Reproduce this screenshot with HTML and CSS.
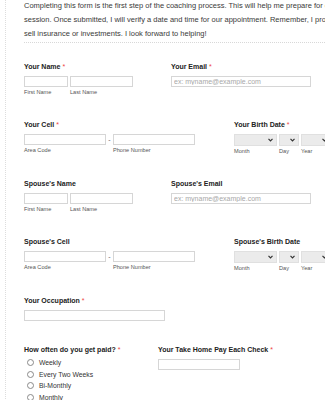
FILE: index.html
```html
<!DOCTYPE html>
<html lang="en">
<head>
    <meta charset="UTF-8">
    <meta name="viewport" content="width=device-width, initial-scale=1.0">
    <title>Coaching Intake Form</title>
    <link rel="stylesheet" href="styles.css">
</head>
<body>
    <div class="page">
        <p class="intro">
            Completing this form is the first step of the coaching process. This will help me prepare for our first<br>
            session. Once submitted, I will verify a date and time for our appointment. Remember, I provide education only and do not<br>
            sell insurance or investments. I look forward to helping!
        </p>
        <div class="separator"></div>

        <div class="row">
            <div class="field name-col">
                <label class="label">Your Name <span class="req">*</span></label>
                <div class="inputs">
                    <div class="sub"><input class="box w-first" type="text"><span class="hint">First Name</span></div>
                    <div class="sub"><input class="box w-last" type="text"><span class="hint">Last Name</span></div>
                </div>
            </div>
            <div class="field">
                <label class="label">Your Email <span class="req">*</span></label>
                <input class="box w-email" type="text" placeholder="ex: myname@example.com">
            </div>
        </div>

        <div class="row">
            <div class="field cell-col">
                <label class="label">Your Cell <span class="req">*</span></label>
                <div class="inputs">
                    <div class="sub"><input class="box w-phone" type="text"><span class="hint">Area Code</span></div>
                    <span class="dash">-</span>
                    <div class="sub"><input class="box w-phone" type="text"><span class="hint">Phone Number</span></div>
                </div>
            </div>
            <div class="field">
                <label class="label">Your Birth Date <span class="req">*</span></label>
                <div class="inputs">
                    <div class="sub"><div class="select w-month"><svg width="5" height="4" viewBox="0 0 5 4"><path d="M0.5 0.8 L2.5 2.8 L4.5 0.8" fill="none" stroke="#333" stroke-width="1.2"/></svg></div><span class="hint">Month</span></div>
                    <div class="sub"><div class="select w-day"><svg width="5" height="4" viewBox="0 0 5 4"><path d="M0.5 0.8 L2.5 2.8 L4.5 0.8" fill="none" stroke="#333" stroke-width="1.2"/></svg></div><span class="hint">Day</span></div>
                    <div class="sub"><div class="select w-year"><svg width="5" height="4" viewBox="0 0 5 4"><path d="M0.5 0.8 L2.5 2.8 L4.5 0.8" fill="none" stroke="#333" stroke-width="1.2"/></svg></div><span class="hint">Year</span></div>
                </div>
            </div>
        </div>

        <div class="row">
            <div class="field name-col">
                <label class="label">Spouse's Name</label>
                <div class="inputs">
                    <div class="sub"><input class="box w-first" type="text"><span class="hint">First Name</span></div>
                    <div class="sub"><input class="box w-last" type="text"><span class="hint">Last Name</span></div>
                </div>
            </div>
            <div class="field">
                <label class="label">Spouse's Email</label>
                <input class="box w-email" type="text" placeholder="ex: myname@example.com">
            </div>
        </div>

        <div class="row">
            <div class="field cell-col">
                <label class="label">Spouse's Cell</label>
                <div class="inputs">
                    <div class="sub"><input class="box w-phone" type="text"><span class="hint">Area Code</span></div>
                    <span class="dash">-</span>
                    <div class="sub"><input class="box w-phone" type="text"><span class="hint">Phone Number</span></div>
                </div>
            </div>
            <div class="field">
                <label class="label">Spouse's Birth Date</label>
                <div class="inputs">
                    <div class="sub"><div class="select w-month"><svg width="5" height="4" viewBox="0 0 5 4"><path d="M0.5 0.8 L2.5 2.8 L4.5 0.8" fill="none" stroke="#333" stroke-width="1.2"/></svg></div><span class="hint">Month</span></div>
                    <div class="sub"><div class="select w-day"><svg width="5" height="4" viewBox="0 0 5 4"><path d="M0.5 0.8 L2.5 2.8 L4.5 0.8" fill="none" stroke="#333" stroke-width="1.2"/></svg></div><span class="hint">Day</span></div>
                    <div class="sub"><div class="select w-year"><svg width="5" height="4" viewBox="0 0 5 4"><path d="M0.5 0.8 L2.5 2.8 L4.5 0.8" fill="none" stroke="#333" stroke-width="1.2"/></svg></div><span class="hint">Year</span></div>
                </div>
            </div>
        </div>

        <div class="row">
            <div class="field">
                <label class="label">Your Occupation <span class="req">*</span></label>
                <input class="box w-occupation" type="text">
            </div>
        </div>

        <div class="row">
            <div class="field paid-col">
                <label class="label">How often do you get paid? <span class="req">*</span></label>
                <ul class="radios">
                    <li><span class="radio"></span>Weekly</li>
                    <li><span class="radio"></span>Every Two Weeks</li>
                    <li><span class="radio"></span>Bi-Monthly</li>
                    <li><span class="radio"></span>Monthly</li>
                </ul>
            </div>
            <div class="field">
                <label class="label">Your Take Home Pay Each Check <span class="req">*</span></label>
                <input class="box w-phone" type="text">
            </div>
        </div>
    </div>
</body>
</html>
```

FILE: styles.css
```css
html, body {
    margin: 0;
    overflow: hidden;
    background-color: #fff;
    font-family: "Liberation Sans", Arial, sans-serif;
}
.page {
    margin-left: 5px;
    padding-left: 18px;
    border-left: 1px dotted #ddd;
    min-height: 100vh;
}
.intro {
    margin: -1px 0 0 0;
    font-size: 7.5px;
    line-height: 14px;
    color: #3a3a3a;
    white-space: nowrap;
}
.separator {
    margin-top: 1px;
    border-top: 1px dotted #d8d8d8;
    margin-bottom: 19px;
}
.row {
    display: flex;
    margin-bottom: 24px;
}
.field {
    display: flex;
    flex-direction: column;
    align-items: flex-start;
    flex-shrink: 0;
}
.name-col {
    width: 147px;
}
.cell-col {
    width: 210px;
}
.paid-col {
    width: 134px;
}
.label {
    font-size: 7px;
    line-height: 10px;
    font-weight: bold;
    color: #222;
    margin-bottom: 4px;
    white-space: nowrap;
}
.req {
    color: #e44;
    font-weight: normal;
}
.inputs {
    display: flex;
    gap: 2px;
}
.sub {
    display: flex;
    flex-direction: column;
}
.box {
    box-sizing: border-box;
    height: 11px;
    margin: 0;
    padding: 0 2px;
    border: 1px solid #d6d6d6;
    background-color: #fff;
    font-family: "Liberation Sans", Arial, sans-serif;
    font-size: 7px;
    outline: none;
}
.box::placeholder {
    color: #a8a8a8;
}
.hint {
    margin-top: 1px;
    font-size: 5.6px;
    line-height: 8px;
    color: #555;
    white-space: nowrap;
}
.dash {
    width: 3px;
    text-align: center;
    font-size: 7px;
    line-height: 11px;
    color: #666;
}
.select {
    box-sizing: border-box;
    height: 12px;
    display: flex;
    align-items: center;
    justify-content: flex-end;
    padding-right: 3px;
    background-color: #ebebeb;
    border: 1px solid #e0e0e0;
}
.w-first { width: 44px; }
.w-last { width: 63px; }
.w-email { width: 140px; }
.w-phone { width: 82px; }
.w-occupation { width: 141px; }
.w-month { width: 43px; }
.w-day { width: 20px; }
.w-year { width: 30px; }
.radios {
    list-style: none;
    margin: -2px 0 0 0;
    padding: 0 0 0 3px;
}
.radios li {
    display: flex;
    align-items: center;
    gap: 5px;
    font-size: 6.8px;
    line-height: 11.5px;
    color: #333;
    white-space: nowrap;
}
.radio {
    box-sizing: border-box;
    width: 7px;
    height: 7px;
    border: 1px solid #8a8a8a;
    border-radius: 50%;
    background-color: #fff;
}
```
